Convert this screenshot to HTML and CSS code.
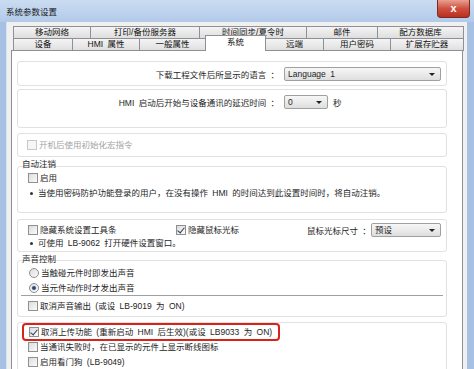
FILE: index.html
```html
<!DOCTYPE html>
<html lang="zh-CN">
<head>
  <meta charset="UTF-8" />
  <meta name="viewport" content="width=device-width, initial-scale=1.0"/>
  <title>系统参数设置</title>
  <link rel="stylesheet" href="styles.css">
</head>
<body>
  <div class="window">
    <div class="titlebar">
      <span class="title">系统参数设置</span>
      <span class="close">x</span>
    </div>

    <div class="client">
      <div class="tab-rows">
        <div class="tab-row back">
          <div class="tab">移动网络</div>
          <div class="tab">打印/备份服务器</div>
          <div class="tab">时间同步/夏令时</div>
          <div class="tab">邮件</div>
          <div class="tab">配方数据库</div>
        </div>
        <div class="tab-row front">
          <div class="tab">设备</div>
          <div class="tab">HMI 属性</div>
          <div class="tab">一般属性</div>
          <div class="tab active">系统</div>
          <div class="tab">远端</div>
          <div class="tab">用户密码</div>
          <div class="tab">扩展存贮器</div>
        </div>
      </div>

      <div class="panel">
        <div class="group g-lang">
          <div class="setting">
            <span class="setting-label">下载工程文件后所显示的语言 ：</span>
            <span class="select wide">Language 1</span>
          </div>
        </div>

        <div class="group g-delay">
          <div class="setting">
            <span class="setting-label">HMI 启动后开始与设备通讯的延迟时间 ：</span>
            <span class="select narrow">0</span>
            <span>秒</span>
          </div>
        </div>

        <div class="group g-macro">
          <label class="check disabled"><span class="cb"></span>开机后使用初始化宏指令</label>
        </div>

        <div class="legend">自动注销</div>
        <div class="group g-logout">
          <label class="check"><span class="cb"></span>启用</label>
          <div class="note">当使用密码防护功能登录的用户，在没有操作 HMI 的时间达到此设置时间时，将自动注销。</div>
        </div>

        <div class="group g-hide">
          <div class="hide-row">
            <label class="check"><span class="cb"></span>隐藏系统设置工具条</label>
            <label class="check"><span class="cb on"></span>隐藏鼠标光标</label>
            <span class="size-label">鼠标光标尺寸 ：</span>
            <span class="select">预设</span>
          </div>
          <div class="note">可使用 LB-9062 打开硬件设置窗口。</div>
        </div>

        <div class="legend">声音控制</div>
        <div class="group g-sound">
          <div class="radios">
            <label class="check"><span class="rb"></span>当触碰元件时即发出声音</label>
            <label class="check"><span class="rb on"></span>当元件动作时才发出声音</label>
          </div>
          <label class="check mute"><span class="cb"></span>取消声音输出 (或设 LB-9019 为 ON)</label>
        </div>

        <div class="group g-misc">
          <div class="highlight">
            <label class="check"><span class="cb on"></span>取消上传功能 (重新启动 HMI 后生效)(或设 LB9033 为 ON)</label>
          </div>
          <label class="check"><span class="cb"></span>当通讯失败时，在已显示的元件上显示断线图标</label>
          <label class="check"><span class="cb"></span>启用看门狗 (LB-9049)</label>
        </div>
      </div>
    </div>
  </div>
</body>
</html>
```

FILE: styles.css
```css
* { box-sizing: border-box; }

body {
  margin: 0;
  width: 474px;
  height: 369px;
  overflow: hidden;
  font-family: "Liberation Sans", "Noto Sans CJK SC", sans-serif;
  font-size: 8.5px;
  word-spacing: 2px;
  color: #1e1e1e;
  background: #a7c1e4;
}

.window {
  display: flex;
  flex-direction: column;
  height: 100%;
}

/* title bar */
.titlebar {
  display: flex;
  align-items: flex-start;
  height: 22px;
  padding-left: 6px;
  background: linear-gradient(#cbdcf2, #b2cae9);
}
.title { line-height: 24px; color: #1a1a1a; }
.close {
  margin-left: auto;
  margin-right: 4px;
  width: 33px;
  height: 18px;
  line-height: 16px;
  text-align: center;
  color: #fff;
  font-weight: bold;
  font-size: 11px;
  background: linear-gradient(#e7a092, #d0503f 50%, #b8301f);
  border: 1px solid #7e2a22;
  border-top: none;
  border-radius: 0 0 4px 4px;
}

.client {
  flex: 1;
  display: flex;
  flex-direction: column;
  margin: 0 7px 0 6px;
  background: #f0f0f0;
  border-left: 1px solid #d9e3ef;
}

/* tabs */
.tab-rows { padding: 4px 4px 0 6px; }
.tab-row { display: grid; height: 12px; }
.tab-row.back { grid-template-columns: 77px 109px 107px 71px 86px; }
.tab-row.front { grid-template-columns: 59px 67px 66px 60px 58px 67px 73px; }
.tab {
  border: 1px solid #8e9096;
  border-bottom: none;
  margin-right: -1px;
  text-align: center;
  line-height: 11px;
  color: #111;
  background: linear-gradient(#f4f4f4, #dedede);
  white-space: nowrap;
}
.tab.active {
  position: relative;
  z-index: 1;
  margin-top: -3px;
  height: 16px;
  background: #fff;
  line-height: 12px;
}

.panel {
  flex: 1;
  margin: 0 4px;
  padding: 5px 15px 0 5px;
  background: #fff;
  border: 1px solid #8e9096;
  border-bottom: none;
}

/* groups */
.group {
  border: 1px solid #e1e1e1;
  border-radius: 3px;
}
.legend {
  height: 9px;
  line-height: 9px;
  margin-top: 3px;
  padding-left: 5px;
}

.setting {
  display: grid;
  grid-template-columns: 261px auto auto;
  justify-content: start;
  column-gap: 5px;
  align-items: center;
  height: 14px;
}
.setting-label { text-align: right; }

.g-lang { margin-top: 5px; height: 25px; display: flex; align-items: center; }
.g-delay { margin-top: 3px; height: 39px; padding-top: 5px; }
.g-macro { margin-top: 5px; height: 24px; display: flex; align-items: center; padding-left: 9px; }
.g-logout { margin-top: -3px; height: 47px; padding: 6px 0 0 10px; }
.g-logout .note { margin-top: 5px; }
.g-hide { margin-top: 6px; height: 33px; padding: 3px 6px 0 10px; }
.g-sound { margin-top: -4px; height: 57px; }
.g-misc { margin-top: 5px; height: 60px; padding-left: 4px; }

.hide-row {
  display: grid;
  grid-template-columns: 148px 131px auto 1fr;
  align-items: center;
  height: 14px;
}
.size-label { white-space: nowrap; }
.hide-row .select { justify-self: end; width: 70px; }
.g-hide .note { margin-top: 1px; }

.radios {
  margin: 0 3px;
  padding: 7px 0 2px 8px;
  border-bottom: 1px solid #a0a0a0;
  display: flex;
  flex-direction: column;
  gap: 5px;
}
.mute { margin: 5px 0 0 10px; }

.highlight {
  display: flex;
  align-items: center;
  width: fit-content;
  height: 18px;
  padding: 0 6px 0 5px;
  border: 2px solid #d8231c;
  border-radius: 4px;
}
.g-misc > .check { margin: 1px 0 5px 6px; }

/* controls */
.check {
  display: flex;
  align-items: center;
  height: 10px;
  line-height: 10px;
  white-space: nowrap;
}
.check.disabled { color: #a3a3a3; }
.check.disabled .cb { border-color: #c8c8c8; background: #f6f6f6; }

.cb, .rb {
  position: relative;
  flex: none;
  width: 10px;
  height: 10px;
  margin-right: 2px;
  border: 1px solid #8f8f8f;
  background: linear-gradient(135deg, #dcdcdc, #fbfbfb);
}
.rb { border-radius: 50%; }
.cb.on::after {
  content: "";
  position: absolute;
  left: 2px;
  top: 0;
  width: 3px;
  height: 6px;
  border: solid #2c3c5a;
  border-width: 0 1.5px 1.5px 0;
  transform: rotate(40deg);
}
.rb.on::after {
  content: "";
  position: absolute;
  left: 2px;
  top: 2px;
  width: 4px;
  height: 4px;
  border-radius: 50%;
  background: #2a4a7a;
}

.note {
  height: 10px;
  line-height: 10px;
  white-space: nowrap;
}
.note::before {
  content: "";
  display: inline-block;
  width: 3px;
  height: 3px;
  margin: 0 5px 1px 2px;
  border-radius: 50%;
  background: #333;
}

.select {
  position: relative;
  display: inline-block;
  height: 14px;
  line-height: 12px;
  padding-left: 3px;
  border: 1px solid #a0a0a0;
  border-radius: 2px;
  background: linear-gradient(#f7f7f7, #dedede);
}
.select::after {
  content: "";
  position: absolute;
  right: 5px;
  top: 5px;
  border: 3px solid transparent;
  border-top: 3px solid #222;
}
.select.wide { width: 157px; }
.select.narrow { width: 44px; }
```
